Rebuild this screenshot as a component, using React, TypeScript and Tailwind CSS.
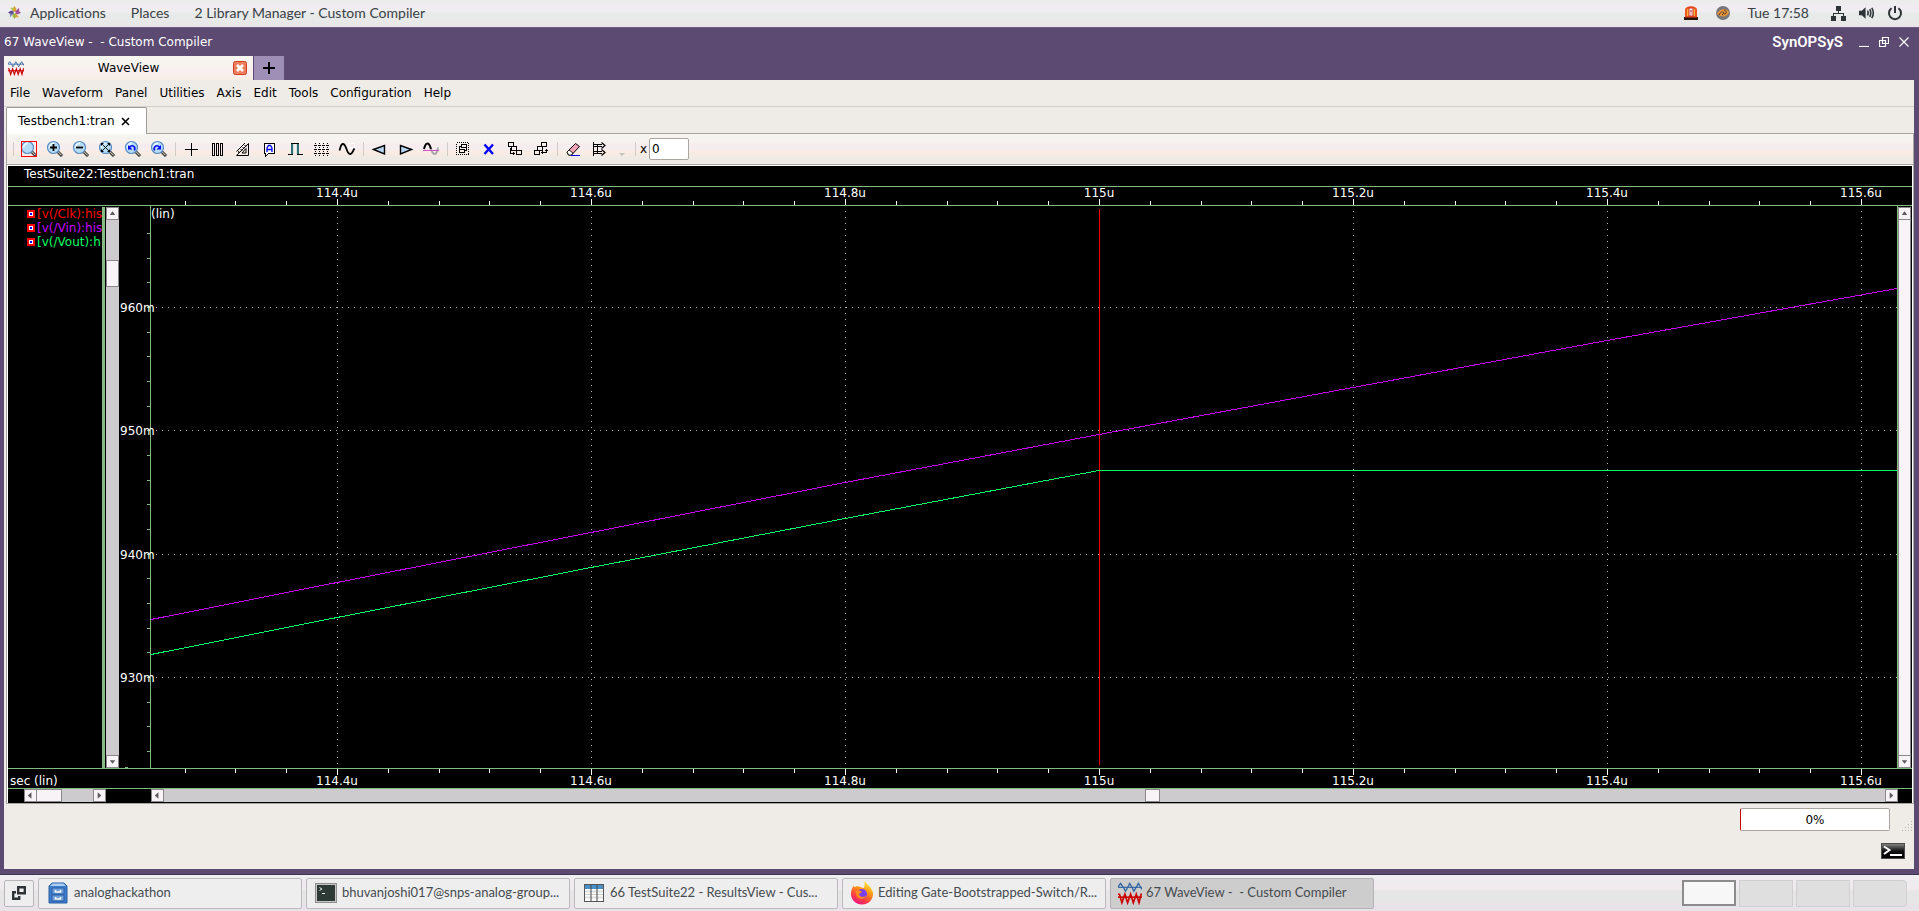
import React from "react";

/* ---------- data ---------- */

const PLOT_W = 1746;
const PLOT_H = 562;

const majorX = [
  { x: 186, label: "114.4u" },
  { x: 440, label: "114.6u" },
  { x: 694, label: "114.8u" },
  { x: 948, label: "115u" },
  { x: 1202, label: "115.2u" },
  { x: 1456, label: "115.4u" },
  { x: 1710, label: "115.6u" },
];
const minorX = Array.from({ length: 34 }, (_, i) => Math.round(186 + (i - 3) * 50.8)).filter(
  (x, i) => (i - 3) % 5 !== 0 && x < PLOT_W
);

const majorY = [
  { y: 101, label: "960m" },
  { y: 224, label: "950m" },
  { y: 348, label: "940m" },
  { y: 471, label: "930m" },
];
const minorY = Array.from({ length: 22 }, (_, i) => Math.round(101 + (i - 3) * 24.66)).filter(
  (y) => y > 5 && y < PLOT_H - 2
);

const vin = "0,413 186,376 440,326 694,276 948,228 1202,181 1456,134 1746,82";
const vout = "0,448 186,411 440,361 694,312 948,264 1746,264";

const signals = [
  { name: "[v(/Clk):his", color: "text-[#ff0000]" },
  { name: "[v(/Vin):his", color: "text-[#c800ff]" },
  { name: "[v(/Vout):h", color: "text-[#00ff64]" },
];

const menus = ["File", "Waveform", "Panel", "Utilities", "Axis", "Edit", "Tools", "Configuration", "Help"];

/* ---------- icons ---------- */

function Icon({ children, soft }: { children: React.ReactNode; soft?: boolean }) {
  return (
    <svg
      width="18"
      height="18"
      viewBox="0 0 18 18"
      fill="none"
      stroke="#000"
      shapeRendering={soft ? "auto" : "crispEdges"}
      aria-hidden="true"
    >
      {children}
    </svg>
  );
}

function Lens({ children, boxed }: { children?: React.ReactNode; boxed?: boolean }) {
  return (
    <Icon soft>
      <path d="M11.5 11.5 L16 16" stroke="#222" strokeWidth="3" />
      <path d="M12 11.8 L15.6 15.4" stroke="#c9c3b4" strokeWidth="1.2" />
      <circle cx="7.5" cy="7.5" r="6" fill="#b5dcf7" stroke="#5b8cc0" strokeWidth="1.2" />
      <path d="M3.6 8 A4 4 0 0 1 8 3.4" stroke="#e9f6ff" strokeWidth="1.6" />
      {children}
      {boxed && <rect x="1.5" y="1.5" width="15" height="15" stroke="#f00" shapeRendering="crispEdges" />}
    </Icon>
  );
}

function WaveIcon({ size }: { size: number }) {
  return (
    <svg width={size} height={size} viewBox="0 0 16 16" fill="none" aria-hidden="true">
      <path d="M0 4.2H16" stroke="#3465a4" strokeWidth="0.8" />
      <path
        d="M0 4 L1.7 1.6 L3.4 4 L5 6.8 L6.6 4 L7.8 1.6 L9.2 4 L10.6 6.8 L12.2 4 L13.6 1.6 L15 4 L16 5.6"
        stroke="#3465a4"
        strokeWidth="0.9"
      />
      <path d="M0 10.8H16" stroke="#cc0000" strokeWidth="1.1" />
      <path
        d="M0 8.8H1 L2.6 14.500 L4.6 8.8 L6.4 14.500 L8.4 8.8 L10.2 14.500 L12.2 8.8 L14 14.500 L15.4 8.8H16"
        stroke="#cc0000"
        strokeWidth="1.1"
      />
    </svg>
  );
}

const toolGroups: { label: string; icon: React.ReactNode }[][] = [
  [
    { label: "Zoom area", icon: <Lens boxed /> },
    { label: "Zoom in", icon: <Lens><path d="M4 7.5H11M7.5 4V11" strokeWidth="1.8" /></Lens> },
    { label: "Zoom out", icon: <Lens><path d="M4 7.5H11" strokeWidth="1.8" /></Lens> },
    {
      label: "Zoom fit",
      icon: (
        <Lens>
          <path d="M4 4L11 11M11 4L4 11" strokeWidth="0.9" />
          <path d="M3.5 5.500V3.500H5.500M9.500 3.500H11.500V5.500M11.500 9.500V11.500H9.500M5.500 11.500H3.500V9.500" strokeWidth="1.2" />
        </Lens>
      ),
    },
    {
      label: "Zoom previous",
      icon: (
        <Lens>
          <path d="M10.5 10.5C12 6 8 4.5 5.5 7" stroke="#00f" strokeWidth="1.6" />
          <path d="M4 5V9.500H8.500Z" fill="#00f" stroke="none" />
        </Lens>
      ),
    },
    {
      label: "Zoom next",
      icon: (
        <Lens>
          <path d="M4.5 10.5C3 6 7 4.5 9.5 7" stroke="#00f" strokeWidth="1.6" />
          <path d="M11 5V9.500H6.500Z" fill="#00f" stroke="none" />
        </Lens>
      ),
    },
  ],
  [
    { label: "Cursor", icon: <Icon><path d="M3 9.5H16M9.5 3V16" /></Icon> },
    {
      label: "Vertical bars",
      icon: (
        <Icon>
          <rect x="4.5" y="3.5" width="2" height="12" />
          <rect x="8.5" y="3.5" width="2" height="12" />
          <rect x="12.5" y="3.5" width="2" height="12" />
        </Icon>
      ),
    },
    {
      label: "Measure",
      icon: (
        <Icon soft>
          <path d="M2.5 15.5H14.5V3.5ZM8 13H12V8.5ZM2.5 11.5L11 3M4.5 11L5 13M6.5 9L8 10.5M8.5 7L10 8.5M10.5 5L12 6.5" />
        </Icon>
      ),
    },
    {
      label: "Annotation",
      icon: (
        <Icon>
          <path d="M4.5 13.5V3.5H14.5V13.5H8.5L5.5 16.5V13.5Z" fill="#fff" />
          <path d="M7 12V8L8.500 5.500H10.500L12 8V12M7 9.500H12" stroke="#00f" strokeWidth="1.3" shapeRendering="auto" />
        </Icon>
      ),
    },
    {
      label: "Pulse",
      icon: (
        <Icon>
          <path d="M2 14.5H7M11 14.5H17M5 3.5H13" />
          <path d="M6 14V4M12 14V4" stroke="#2f6f75" strokeWidth="2" />
          <path d="M7.500 13.500V4M10.500 13.500V4" stroke="#cfe6e4" />
        </Icon>
      ),
    },
    {
      label: "Grid",
      icon: (
        <Icon>
          <path d="M3.5 3V17M7.500 3V17M11.500 3V17M15.500 3V17" strokeDasharray="1 1" />
          <path d="M2 5.500H17M2 9.500H17M2 13.500H17" strokeDasharray="1 1" />
        </Icon>
      ),
    },
    {
      label: "Waveform",
      icon: (
        <Icon soft>
          <path d="M10.500 3.5H16.500V7.500H10.500Z" stroke="#fff" />
          <path d="M1.5 10.5C2.5 8 2.5 4 5 4C8.5 4 8.5 14 12 14C14.5 14 15 10 16.5 8.5" strokeWidth="1.8" />
        </Icon>
      ),
    },
  ],
  [
    { label: "Previous edge", icon: <Icon soft><path d="M3.5 9.5L14.5 5.5V14Z" fill="#b9d7f2" strokeWidth="1.4" /></Icon> },
    { label: "Next edge", icon: <Icon soft><path d="M15.5 9.5L4.5 5.5V14Z" fill="#b9d7f2" strokeWidth="1.4" /></Icon> },
    {
      label: "Compare waveform",
      icon: (
        <Icon soft>
          <path d="M9 9C10 12 10.5 14 12.5 14C14.5 14 15.5 11 16 7.5" stroke="#aaa" strokeWidth="2" />
          <path d="M2 9C3 5 4 3.5 5.5 3.5C7.5 3.5 8 6 9 9" strokeWidth="2" />
          <path d="M1 10.5H17" stroke="#d24fc4" shapeRendering="crispEdges" />
        </Icon>
      ),
    },
  ],
  [
    {
      label: "Select group",
      icon: (
        <Icon>
          <rect x="2.5" y="2.5" width="12" height="12" strokeDasharray="1 1" />
          <rect x="7.5" y="4.5" width="5" height="3" />
          <rect x="5.5" y="9.5" width="5" height="3" />
          <path d="M5.500 9V6.500H7M12.500 8V10.500H11" />
        </Icon>
      ),
    },
    {
      label: "Delete",
      icon: <Icon soft><path d="M4.5 4.5L13 14M13 4.5L4.5 14" stroke="#00f" strokeWidth="2.4" /></Icon>,
    },
    {
      label: "Group",
      icon: (
        <Icon>
          <rect x="2.5" y="2.5" width="5" height="4" />
          <rect x="5.500" y="6.500" width="5" height="4" />
          <rect x="10.500" y="10.500" width="5" height="4" />
          <path d="M4.500 8V13.500H9M7.500 12V15M8.500 13V14" />
        </Icon>
      ),
    },
    {
      label: "Ungroup",
      icon: (
        <Icon>
          <rect x="9.5" y="2.5" width="5" height="4" />
          <rect x="5.500" y="6.500" width="5" height="4" />
          <rect x="2.500" y="10.500" width="5" height="4" />
          <path d="M9 12.500H14.500V9M13 10.500H16M10.500 11V14" />
        </Icon>
      ),
    },
  ],
  [
    {
      label: "Erase",
      icon: (
        <Icon soft>
          <path d="M3 12L11.5 3.5L15.5 6.5L7.5 15H4.5Z" fill="#f3a3b5" />
          <path d="M3 12L4.6 15H7.5L9 13L5 10Z" fill="#fff" strokeWidth="0.8" />
          <path d="M7 15.5H16" stroke="#00f" shapeRendering="crispEdges" />
        </Icon>
      ),
    },
    {
      label: "Expand buses",
      icon: (
        <Icon>
          <path d="M3.5 2V16M3 4.5H12M3 6.5H12M3 11.5H12M3 13.5H12M7.5 4V14" />
          <path d="M11.5 2.500L15 5.500L11.5 8.500M11.5 9.500L15 12.500L11.5 15.500" shapeRendering="auto" strokeWidth="1.2" />
        </Icon>
      ),
    },
  ],
];

function Sep() {
  return <span className="flex w-1.5 justify-center"><span className="h-3.5 w-px bg-[#d0cdc9]" /></span>;
}

function Arrow({ dir }: { dir: "up" | "down" | "left" | "right" }) {
  const d = { up: "M3 7L6 3L9 7Z", down: "M3 4L6 8L9 4Z", left: "M7 2V9L3 5.5Z", right: "M4 2V9L8 5.5Z" }[dir];
  return (
    <button
      aria-label={`Scroll ${dir}`}
      className="flex size-[13px] shrink-0 items-center justify-center border border-[#8a888a] bg-[#f7f3f7]"
    >
      <svg width="11" height="11" viewBox="0 0 12 11" aria-hidden="true">
        <path d={d} fill="#5c5a5c" />
      </svg>
    </button>
  );
}

/* ---------- chart parts ---------- */

function Ruler({ bottom }: { bottom?: boolean }) {
  return (
    <div className={`relative flex shrink-0 text-white ${bottom ? "h-[19px]" : "h-[18px]"}`}>
      <div className="w-[143px] shrink-0">{bottom && <div className="px-0.5 pt-1 leading-4">sec (lin)</div>}</div>
      <div className="relative min-w-0 flex-1">
        <svg
          className="absolute inset-0 h-full w-full"
          viewBox={`0 0 ${PLOT_W} ${bottom ? 19 : 18}`}
          preserveAspectRatio="none"
          stroke="#fff"
          shapeRendering="crispEdges"
          aria-hidden="true"
        >
          {minorX.map((x) => (
            <path key={x} d={`M${x + 0.5} ${bottom ? 0 : 14}v4`} vectorEffect="non-scaling-stroke" />
          ))}
          {majorX.map(({ x }) => (
            <path key={x} d={`M${x + 0.5} ${bottom ? 0 : 12}v6`} vectorEffect="non-scaling-stroke" />
          ))}
        </svg>
        {majorX.map(({ x, label }) => (
          <span
            key={x}
            className={`absolute -translate-x-1/2 leading-4 ${bottom ? "top-1" : "-top-0.5"}`}
            style={{ left: `${(x / PLOT_W) * 100}%` }}
          >
            {label}
          </span>
        ))}
      </div>
      <div className="w-[15px] shrink-0" />
    </div>
  );
}

function Plot() {
  return (
    <div className="flex min-h-0 flex-1">
      <ul className="flex w-[94px] shrink-0 flex-col overflow-hidden pt-px pl-[19px]">
        {signals.map((s) => (
          <li key={s.name} className={`flex h-3.5 items-center gap-0.5 whitespace-nowrap ${s.color}`}>
            <span className="flex size-2 shrink-0 items-center justify-center bg-[#f00]">
              <span className="size-1 border border-white bg-[#00f]" />
            </span>
            <span className="leading-4">{s.name}</span>
          </li>
        ))}
      </ul>
      <div className="mt-px w-[3px] bg-[#86bb84]" />
      <div className="mt-px mr-px ml-px flex w-[13px] flex-col bg-[#cdcbcd]">
        <Arrow dir="up" />
        <div className="mt-10 h-[27px] border border-[#8a888a] bg-[#f7f3f7]" />
        <div className="flex-1" />
        <Arrow dir="down" />
      </div>
      <div className="relative w-[31px] shrink-0">
        <svg
          className="absolute inset-0 h-full w-full"
          viewBox={`0 0 31 ${PLOT_H}`}
          preserveAspectRatio="none"
          stroke="#82b982"
          shapeRendering="crispEdges"
          aria-hidden="true"
        >
          <path d={`M30.5 0V${PLOT_H}`} />
          <path d={`M5 ${PLOT_H - 0.5}h3`} />
          {minorY.map((y) => (
            <path key={y} d={`M27 ${y + 0.5}h4`} />
          ))}
        </svg>
        {majorY.map(({ y, label }) => (
          <span
            key={y}
            className="absolute left-0 z-10 -translate-y-1/2 leading-4 text-white"
            style={{ top: `${((y + 1) / PLOT_H) * 100}%` }}
          >
            {label}
          </span>
        ))}
      </div>
      <div className="relative min-w-0 flex-1">
        <svg
          className="absolute inset-0 h-full w-full"
          viewBox={`0 0 ${PLOT_W} ${PLOT_H}`}
          preserveAspectRatio="none"
          fill="none"
          shapeRendering="crispEdges"
          role="img"
          aria-label="Transient waveforms"
        >
          <g stroke="#b4b4b4" strokeDasharray="1 5">
            {majorY.map(({ y }) => (
              <path key={y} d={`M5 ${y + 0.5}H${PLOT_W}`} vectorEffect="non-scaling-stroke" />
            ))}
            {majorX.map(({ x }) => (
              <path key={x} d={`M${x + 0.5} 5V${PLOT_H - 3}`} vectorEffect="non-scaling-stroke" />
            ))}
          </g>
          <path d={`M948.5 3V${PLOT_H - 3}`} stroke="#f00" vectorEffect="non-scaling-stroke" />
          <polyline points={vin} transform="translate(0 .5)" stroke="#c800ff" vectorEffect="non-scaling-stroke" />
          <polyline points={vout} transform="translate(0 .5)" stroke="#00ff64" vectorEffect="non-scaling-stroke" />
        </svg>
        <span className="absolute top-0 left-0 leading-4 text-white">(lin)</span>
      </div>
      <div className="w-px bg-[#82b982]" />
      <div className="mt-px mr-px flex w-[13px] flex-col bg-[#f7f3f7]">
        <Arrow dir="up" />
        <div className="flex-1 border-x border-[#8a888a]" />
        <Arrow dir="down" />
      </div>
    </div>
  );
}

function HorizontalScrolls() {
  return (
    <div className="flex h-3.5 shrink-0">
      <div className="ml-4 flex h-[13px] w-[82px] shrink-0 bg-[#cdcbcd]">
        <Arrow dir="left" />
        <div className="-ml-px h-[13px] w-[26px] border border-[#8a888a] bg-[#f7f3f7]" />
        <div className="flex-1" />
        <Arrow dir="right" />
      </div>
      <div className="ml-[45px] flex h-[13px] min-w-0 flex-1 bg-[#cdcbcd]">
        <Arrow dir="left" />
        <div className="flex-[981]" />
        <div className="h-[13px] w-[15px] border border-[#8a888a] bg-[#f7f3f7]" />
        <div className="flex-[725]" />
        <Arrow dir="right" />
      </div>
      <div className="w-3.5 shrink-0" />
    </div>
  );
}

/* ---------- desktop panels ---------- */

function TopBar() {
  return (
    <header className="flex h-7 shrink-0 items-center border-b border-[#6f5d87] bg-[linear-gradient(#ececec_0,#f1edf1_40%,#e7ebe9_50%,#e8e8e8_80%,#e9e4e9_100%)] px-2 pb-0.5 font-['Lato','Noto_Sans',sans-serif] text-sm text-[#3a4145]">
      <svg width="13" height="13" viewBox="0 0 14 14" aria-hidden="true">
        <path d="M7 0L9 3V6H5V3Z" fill="#d9a12c" />
        <path d="M14 7L11 9H8V5H11Z" fill="#a7509a" />
        <path d="M7 14L5 11V8H9V11Z" fill="#9ab83f" />
        <path d="M0 7L3 5H6V9H3Z" fill="#5a4a8c" />
        <path d="M2 2H6V6Z" fill="#b6c957" />
        <path d="M12 2V6L8 6Z" fill="#a7509a" />
        <path d="M12 12H8V8Z" fill="#dfa53a" />
        <path d="M2 12V8L6 8Z" fill="#7b83b8" />
      </svg>
      <nav className="flex flex-1 gap-[25px] pl-[9px]">
        <button>Applications</button>
        <button>Places</button>
        <button>2 Library Manager - Custom Compiler</button>
      </nav>
      <div className="flex items-center pr-2">
        <svg className="mr-4" width="16" height="16" viewBox="0 0 16 16" aria-hidden="true">
          <path d="M2 12V5C2 0 14 0 14 5V12Z" fill="#f0541e" />
          <path d="M4 11V5C5 2 11 2 12 5V11Z" fill="#ffb53c" />
          <rect x="6" y="3" width="4" height="8" fill="#fff" stroke="#c22" />
          <path d="M8 5v2.5M8 8.5v1" stroke="#a00" />
          <path d="M1 12H15V15H1Z" fill="#24120c" />
          <path d="M2 12H14" stroke="#e3401a" />
        </svg>
        <svg className="mr-4" width="16" height="16" viewBox="0 0 16 16" aria-hidden="true">
          <circle cx="8" cy="8" r="7" fill="#77767a" />
          <path d="M2 9C4 3 12 3 14 7C13 12 6 13 2 9Z" fill="#e8953a" />
          <path d="M4 10C7 4 11 8 7 10M9 9C12 9 12 6 9 5" stroke="#4c3a28" fill="none" />
        </svg>
        <span className="mr-[22px]">Tue 17:58</span>
        <svg className="mr-3" width="16" height="16" viewBox="0 0 16 16" fill="#2e3436" aria-hidden="true">
          <path d="M5 1H10V6H5ZM0 11H5V16H0ZM10 11H15V16H10ZM7 6H8V8H13V11H12V9H3V11H2V8H7Z" />
        </svg>
        <svg className="mr-3" width="16" height="16" viewBox="0 0 17 16" fill="none" stroke="#2e3436" strokeWidth="1.7" aria-hidden="true">
          <path d="M0 5.5H3L7 2V14L3 10.5H0Z" fill="#2e3436" stroke="none" />
          <path d="M9 5.5Q10.5 8 9 10.5M11.4 4Q13.6 8 11.4 12M13.6 2.5Q16.8 8 13.6 13.5" />
        </svg>
        <svg width="16" height="16" viewBox="0 0 16 16" fill="none" stroke="#2e3436" strokeWidth="2" aria-hidden="true">
          <path d="M8 1V8M4.6 3.2A6 6 0 1 0 11.4 3.2" />
        </svg>
      </div>
    </header>
  );
}

const tasks = [
  {
    name: "analoghackathon",
    icon: (
      <svg width="20" height="22" viewBox="0 0 20 22" aria-hidden="true">
        <path d="M1 4L4 1H16L19 4V21H1Z" fill="#3f7cc9" stroke="#2b5fa5" />
        <path d="M2 4H18L15.500 1.500H4.500Z" fill="#a9ccf2" />
        <path d="M4 6H16V12H4ZM4 13H16V19H4Z" fill="#6fa0dc" stroke="#2b5fa5" />
        <path d="M7.500 8V10H12.500V8M7.500 15V17H12.500V15" fill="none" stroke="#f4f4ee" strokeWidth="1.500" />
      </svg>
    ),
  },
  {
    name: "bhuvanjoshi017@snps-analog-group...",
    icon: (
      <svg width="22" height="20" viewBox="0 0 22 20" aria-hidden="true">
        <rect x=".5" y=".5" width="21" height="19" fill="#c8c8c8" stroke="#8d8d8d" />
        <rect x="2" y="2" width="18" height="16" fill="#2d3a36" />
        <path d="M4.500 4.500L7 6L4.500 7.500M7 10.500H10" stroke="#e4efe6" fill="none" />
      </svg>
    ),
  },
  {
    name: "66 TestSuite22 - ResultsView - Cus...",
    icon: (
      <svg width="20" height="18" viewBox="0 0 20 18" aria-hidden="true">
        <rect x=".5" y=".5" width="19" height="17" fill="#fff" stroke="#555" />
        <rect x="1" y="1" width="18" height="4" fill="#4a90c8" />
        <path d="M1 7.500H19M1 13.500H19" stroke="#ddd" strokeWidth="2" />
        <path d="M1 10.500H19" stroke="#ccc" />
        <path d="M7 1V17M13 1V17" stroke="#444" />
      </svg>
    ),
  },
  {
    name: "Editing Gate-Bootstrapped-Switch/R...",
    icon: (
      <svg width="24" height="24" viewBox="0 0 24 24" aria-hidden="true">
        <defs>
          <linearGradient id="fox" x1=".8" y1="0" x2=".3" y2="1">
            <stop offset="0" stopColor="#fff44f" />
            <stop offset=".4" stopColor="#ff980e" />
            <stop offset=".75" stopColor="#ff3b47" />
            <stop offset="1" stopColor="#e31587" />
          </linearGradient>
        </defs>
        <path
          d="M15 0C17 4 22 6 23 12C23.500 19 18 23.500 12 23.500C5 23.500 .8 18 1 12.500C1 9 2.500 6 4 4.500L4.500 6.500C5.500 5.500 7 5 8.500 5.200C10 5.500 12 7 14 7C15 5 14 2 15 0Z"
          fill="url(#fox)"
        />
        <circle cx="12" cy="13" r="5" fill="#7b3ff2" />
        <path d="M6 10C9 8 10 10 12 10.500C11.500 12 9.500 12 9 13C9.500 16 13 17 16 14.500C15 19 7 19.500 6 13Z" fill="#ff8a16" />
      </svg>
    ),
  },
  { name: "67 WaveView -  - Custom Compiler", icon: <WaveIcon size={24} />, active: true },
];

function Taskbar() {
  return (
    <footer className="flex h-9 shrink-0 items-center gap-1 overflow-hidden bg-[linear-gradient(#efeef0_0,#efeaee_40%,#e5e6e5_45%,#e6e6e6_75%,#e8e3e8_80%)] pr-3 pl-1 font-['Lato','Noto_Sans',sans-serif] text-[13px] text-[#454b4e]">
      <button
        aria-label="Show desktop"
        className="flex h-[27px] w-[30px] shrink-0 items-center justify-center rounded-xs border border-[#b9b6b9] bg-[#eeeeee]"
      >
        <svg width="14" height="14" viewBox="0 0 14 14" fill="none" stroke="#2e3436" strokeWidth="2.400" aria-hidden="true">
          <path d="M6.200 1.200H12.800V7.200H6.200Z" />
          <path d="M4 6.200H1.200V12.800H7.200V10" />
        </svg>
      </button>
      {tasks.map((t) => (
        <button
          key={t.name}
          className={`flex h-[31px] w-[264px] min-w-0 items-center gap-1 rounded-xs border px-[7px] whitespace-pre ${
            t.active ? "border-[#b3b1b3] bg-[#cdcdcd]" : "border-[#bdbabd] bg-[#eeeeee]"
          }`}
        >
          <span className="flex w-6 shrink-0 items-center justify-center">{t.icon}</span>
          <span className="min-w-0 truncate whitespace-pre">{t.name}</span>
        </button>
      ))}
      <div className="ml-auto flex shrink-0 items-center gap-[3px]">
        <button aria-label="Workspace 1" className="h-[26px] w-[54px] border-2 border-[#8c8c8c] bg-[#f7f7f7]" />
        <button aria-label="Workspace 2" className="h-[27px] w-[54px] border border-[#d0ced0] bg-[#dfdfdf]" />
        <button aria-label="Workspace 3" className="h-[27px] w-[54px] border border-[#d0ced0] bg-[#dfdfdf]" />
        <button aria-label="Workspace 4" className="h-[27px] w-[54px] rounded-r-sm border border-[#d0ced0] bg-[#dfdfdf]" />
      </div>
    </footer>
  );
}

/* ---------- page ---------- */

export default function App() {
  return (
    <div className="flex h-screen flex-col bg-[#5c4a72] font-['DejaVu_Sans',sans-serif] text-xs text-black">
      <TopBar />

      <main className="flex min-h-0 flex-1 flex-col border-b border-[#3f3550] pr-[5px] pb-[5px] pl-1">
        <div className="flex h-7 shrink-0 items-center text-white">
          <h1 className="flex-1 whitespace-pre">67 WaveView -  - Custom Compiler</h1>
          <span className="mr-4 font-['Roboto','Liberation_Sans',sans-serif] text-[15px] leading-4 font-semibold">
            SynOPSyS
          </span>
          <div className="flex items-center gap-2.5 pr-[5px]">
            {[
              { n: "Minimize", d: "M0 9.500H10" },
              { n: "Restore", d: "M3.500 .5H9.500V6.500H3.500ZM.5 3.500H6.500V9.500H.5Z" },
              { n: "Close", d: "M.5 .5L9.500 9.500M9.500 .5L.5 9.500" },
            ].map((b) => (
              <button key={b.n} aria-label={b.n}>
                <svg width="10" height="10" viewBox="0 0 10 10" fill="none" stroke="#fff" strokeWidth="1.200" aria-hidden="true">
                  <path d={b.d} />
                </svg>
              </button>
            ))}
          </div>
        </div>

        <div className="flex h-6 shrink-0 gap-px">
          <div className="flex w-[249px] items-center bg-[linear-gradient(#f7f5f0_0,#f8f3f0_40%,#f9eff1_60%,#f6ede5_100%)] px-1">
            <WaveIcon size={16} />
            <span className="flex-1 text-center">WaveView</span>
            <button aria-label="Close WaveView" className="mr-0.5">
              <svg width="14" height="14" viewBox="0 0 14 14" aria-hidden="true">
                <rect x=".5" y=".5" width="13" height="13" rx="2" fill="#e9805e" stroke="#d8391f" />
                <path d="M4 4L10 10M10 4L4 10" stroke="#fff" strokeWidth="2.600" />
              </svg>
            </button>
          </div>
          <button aria-label="New tab" className="flex w-[30px] items-center justify-center bg-[#9f8eb5]">
            <svg width="12" height="12" viewBox="0 0 12 12" stroke="#000" strokeWidth="2" aria-hidden="true">
              <path d="M0 6H12M6 0V12" />
            </svg>
          </button>
        </div>

        <div className="flex min-h-0 flex-1 flex-col bg-[#efebe7]">
          <nav className="flex h-[27px] shrink-0 items-start gap-3 border-b border-[#d2cfca] px-1.5 pt-[5px]">
            {menus.map((m) => (
              <button key={m} className="leading-4">
                {m}
              </button>
            ))}
          </nav>

          <div className="flex h-[27px] shrink-0 items-stretch pl-0.5">
            <div className="flex w-[141px] items-center gap-1.5 rounded-t-xs border border-b-0 border-[#9f9c98] bg-white pl-[11px]">
              <span>Testbench1:tran</span>
              <button aria-label="Close Testbench1:tran">
                <svg width="9" height="9" viewBox="0 0 9 9" stroke="#000" strokeWidth="1.600" aria-hidden="true">
                  <path d="M1 1L8 8M8 1L1 8" />
                </svg>
              </button>
            </div>
            <div className="flex-1 border-b border-[#a8a5a1]" />
          </div>

          <div className="ml-0.5 flex min-h-0 flex-1 flex-col border-r border-b border-l border-[#a8a5a1]">
            <div className="flex h-[31px] shrink-0 items-center border-b border-[#a8a5a1] bg-[linear-gradient(#f6f4f0_0,#f6f3ef_30%,#f6ecee_33%,#f6edee_52%,#f8ece4_56%,#f6ebe4_72%,#eeebe6_76%)] pl-[3px]">
              <Sep />
              {toolGroups.map((group, i) => (
                <React.Fragment key={i}>
                  {i > 0 && <Sep />}
                  {group.map((t) => (
                    <button key={t.label} aria-label={t.label} className="flex w-[26px] justify-center">
                      {t.icon}
                    </button>
                  ))}
                </React.Fragment>
              ))}
              <span className="flex w-5 justify-center pt-3">
                <svg width="6" height="4" viewBox="0 0 6 4" aria-hidden="true">
                  <path d="M0 0H6L3 3Z" fill="#c4c1bd" />
                </svg>
              </span>
              <Sep />
              <label htmlFor="x-value" className="px-0.5">
                x
              </label>
              <input
                id="x-value"
                defaultValue="0"
                className="h-[22px] w-10 rounded-xs border border-[#aaa7a3] bg-white px-0.5"
              />
            </div>

            <div className="flex min-h-0 flex-1 flex-col border-t border-r border-l border-white bg-black">
              <div className="h-5 shrink-0 pl-4 leading-4 text-white">TestSuite22:Testbench1:tran</div>
              <div className="flex min-h-0 flex-1 flex-col border-t border-[#82b982]">
                <Ruler />
                <div className="flex min-h-0 flex-1 flex-col border-y border-[#82b982]">
                  <Plot />
                </div>
                <Ruler bottom />
              </div>
              <div className="border-t border-[#82b982]">
                <HorizontalScrolls />
              </div>
            </div>
          </div>

          <div className="flex h-[65px] shrink-0 flex-col items-end">
            <div className="flex items-end gap-3 pt-1 pr-0.5">
              <div
                role="progressbar"
                aria-valuenow={0}
                aria-label="Progress"
                className="flex h-[23px] w-[150px] items-center justify-center rounded-xs border border-l-[#c40000] border-[#aaa7a3] bg-white"
              >
                0%
              </div>
              <svg width="10" height="10" viewBox="0 0 10 10" fill="#b5b2ae" shapeRendering="crispEdges" aria-hidden="true">
                <path d="M9 0h1v1h-1zM9 3h1v1h-1zM6 3h1v1h-1zM9 6h1v1h-1zM6 6h1v1h-1zM3 6h1v1h-1zM9 9h1v1h-1zM6 9h1v1h-1zM3 9h1v1h-1zM0 9h1v1h-1z" />
              </svg>
            </div>
            <button aria-label="Console" className="mt-3 mr-[9px]">
              <svg width="24" height="17" viewBox="0 0 24 17" aria-hidden="true">
                <defs>
                  <linearGradient id="con" x1="0" y1="0" x2="0" y2="1">
                    <stop offset="0" stopColor="#8a8a8a" />
                    <stop offset=".5" stopColor="#111" />
                    <stop offset="1" stopColor="#000" />
                  </linearGradient>
                </defs>
                <rect x=".5" y=".5" width="23" height="15" fill="url(#con)" stroke="#4b4b4b" />
                <path d="M3 3.500L8.500 7L3 11" stroke="#fff" strokeWidth="2" fill="none" />
                <path d="M9 12H21" stroke="#fff" strokeWidth="2" />
              </svg>
            </button>
          </div>
        </div>
      </main>

      <Taskbar />
    </div>
  );
}
